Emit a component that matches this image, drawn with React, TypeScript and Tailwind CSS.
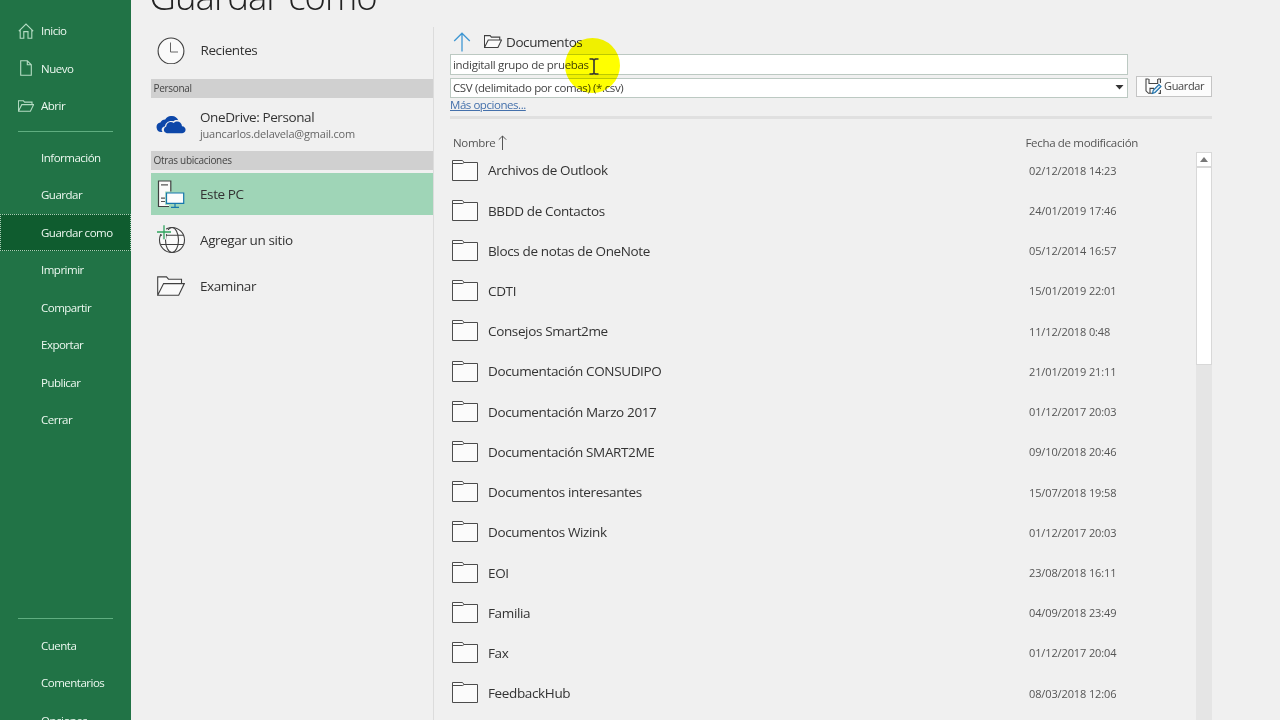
import type { ReactNode } from 'react'
import clsx from 'clsx'

const mainActions = ['Información', 'Guardar', 'Guardar como', 'Imprimir', 'Compartir', 'Exportar', 'Publicar', 'Cerrar']
const footerActions = ['Cuenta', 'Comentarios', 'Opciones']

const folders = [
    { name: 'Archivos de Outlook', date: '02/12/2018 14:23' },
    { name: 'BBDD de Contactos', date: '24/01/2019 17:46' },
    { name: 'Blocs de notas de OneNote', date: '05/12/2014 16:57' },
    { name: 'CDTI', date: '15/01/2019 22:01' },
    { name: 'Consejos Smart2me', date: '11/12/2018 0:48' },
    { name: 'Documentación CONSUDIPO', date: '21/01/2019 21:11' },
    { name: 'Documentación Marzo 2017', date: '01/12/2017 20:03' },
    { name: 'Documentación SMART2ME', date: '09/10/2018 20:46' },
    { name: 'Documentos interesantes', date: '15/07/2018 19:58' },
    { name: 'Documentos Wizink', date: '01/12/2017 20:03' },
    { name: 'EOI', date: '23/08/2018 16:11' },
    { name: 'Familia', date: '04/09/2018 23:49' },
    { name: 'Fax', date: '01/12/2017 20:04' },
    { name: 'FeedbackHub', date: '08/03/2018 12:06' },
]

function HomeIcon() {
    return (
        <svg width="16" height="16" viewBox="0 0 16 16" fill="none" stroke="#b5dcc4" strokeWidth="1.1">
            <path d="M.8 8.2 8 1l7.2 7.2M2.2 7v8.2h3.6V8.6h4.2v6.6h3.8V7" />
        </svg>
    )
}

function NewIcon() {
    return (
        <svg width="16" height="16" viewBox="0 0 16 16" fill="none" stroke="#b5dcc4" strokeWidth="1.1">
            <path d="M2.7.8h6.6l4 4v10.4H2.7zM9.3.8v4h4" />
        </svg>
    )
}

function OpenFolderIcon({ className, stroke, fill = 'none' }: { className: string; stroke: string; fill?: string }) {
    return (
        <svg className={className} viewBox="0 0 28 20" fill={fill} stroke={stroke} strokeWidth="1.1">
            <path d="M.7 19.3V.9h8.8l2 2.3h13v4.4M.7 19.3 6.6 7.6h20.7l-5.6 11.7z" vectorEffect="non-scaling-stroke" />
        </svg>
    )
}

function ClockIcon() {
    return (
        <svg width="28" height="28" viewBox="0 0 28 28" stroke="#3f3f3f" fill="#fafafa">
            <circle cx="14" cy="14.9" r="12.9" strokeWidth="1.1" />
            <path d="M13.5 6.5v9.5h7.5" fill="none" stroke="#666" />
        </svg>
    )
}

function OneDriveIcon() {
    return (
        <svg width="30" height="18" viewBox="0 0 30 18" fill="#0d47a9">
            <path d="M6.6 15.9H5.5A4.8 4.8 0 0 1 4.4 6.4 5.3 5.3 0 0 1 9.2 3.5 7.5 7.5 0 0 1 22.3 4.2c-2-.5-3.7 0-5 1.1-4-1.1-7.9 1.2-8.3 5-3.1.4-4.4 3.6-2.4 5.6z" />
            <path d="M10.8 17.2a3.4 3.4 0 0 1-.6-6.6c0-4 4.4-5.9 7.6-3.6 3-3 8-1 8.2 3.2 4.7.2 4.7 7 .3 7z" />
        </svg>
    )
}

function ComputerIcon() {
    return (
        <svg width="28" height="28" viewBox="0 0 28 28" fill="none" strokeWidth="1.2">
            <path d="M1.5 1h12.3v25.5H1.5z" fill="#fafafa" stroke="#404040" />
            <path d="M4 4.8h7M4 18.2h4M4 21.5h4" stroke="#555" />
            <path d="M8.2 11.4H29v16.2H12V25H8.2z" fill="#9fd5b7" />
            <path d="M9.5 13h17.2v10.3H9.5z" fill="#fcfcfc" stroke="#1677ad" />
            <path d="M18 23.5v3.7M14 27.3h8" stroke="#1677ad" />
        </svg>
    )
}

function GlobeIcon() {
    return (
        <svg width="30" height="30" viewBox="0 0 30 30" fill="none" stroke="#404040" strokeWidth="1.1">
            <circle cx="16" cy="15" r="12.5" fill="#fafafa" />
            <ellipse cx="16" cy="15" rx="6.5" ry="12.5" />
            <path d="M5 10.3h22M5 19.5h22" />
            <path d="M1 7h13.5M8 1v13.5" stroke="#f0f0f0" strokeWidth="4" />
            <path d="M1 7h14M8 .3v14" stroke="#2fa45d" strokeWidth="1.3" />
        </svg>
    )
}

function FolderIcon() {
    return (
        <svg className="shrink-0" width="27" height="22" viewBox="0 0 27 22" fill="#fbfbfb" stroke="#4c4c4c">
            <path d="M.5 20.5V.5h10l1.5 2H25.5v18z" />
            <path d="M.5 3.5h10.2l1.3-1" fill="none" />
        </svg>
    )
}

function SaveIcon() {
    return (
        <svg width="17" height="17" viewBox="0 0 17 17" fill="none" stroke="#444" strokeWidth="1.1">
            <path d="M7 15.3H3.5L1 12.8V1h2.5M13 1h2.4v4M4 1v4.5h8.7V1M5 15v-4.6h4M13.5 15.4h1.9V12" />
            <path d="m7.5 15.3.7-2.9L14 6.5l2 2-5.9 5.9z" fill="#dcecf6" stroke="#1b6ea8" />
        </svg>
    )
}

function UpArrow({ className, stroke }: { className: string; stroke: string }) {
    return (
        <svg className={className} viewBox="0 0 18 20" fill="none" stroke={stroke} strokeWidth="1.3">
            <path d="M9 19.5V1.2M1.2 9 9 1.2 16.8 9" />
        </svg>
    )
}

function NavItem({ label, icon, active }: { label: string; icon?: ReactNode; active?: boolean }) {
    return (
        <div className={clsx('flex h-[37.45px] shrink-0 items-center', active ? 'border border-dotted border-[#a8cdb5] bg-[#0f5c2f] pl-[17px]' : 'pl-[18px]')}>
            <div className="w-[23px] shrink-0">{icon}</div>
            <span className="pt-px text-[11.5px] leading-4 font-medium tracking-[-0.5px] whitespace-nowrap text-[#edf8f0]">{label}</span>
        </div>
    )
}

function SectionTitle({ children }: { children: ReactNode }) {
    return <div className="flex h-[19px] items-center bg-[#d0d0d0] pl-[3px] text-[10px] tracking-[-0.3px] text-[#444]">{children}</div>
}

function Place({ icon, label, detail, className }: { icon: ReactNode; label: string; detail?: string; className: string }) {
    return (
        <div className={clsx('flex items-center', className)}>
            <div className="flex w-[40px] shrink-0 justify-center">{icon}</div>
            <div className="pl-[9.5px]">
                <div className="text-[13.5px] leading-[18px] tracking-[-0.4px]">{label}</div>
                {detail && <div className="text-[11px] leading-4 tracking-[-0.2px] text-[#666]">{detail}</div>}
            </div>
        </div>
    )
}

export default function App() {
    return (
        <div className="relative flex h-[720px] w-[1280px] overflow-hidden bg-[#f0f0f0] font-['Open_Sans','Noto_Sans',sans-serif] text-[#333]">
            {/* Backstage navigation */}
            <nav className="flex w-[131px] shrink-0 flex-col overflow-hidden bg-[#217346] pt-[12px]">
                <NavItem label="Inicio" icon={<HomeIcon />} />
                <NavItem label="Nuevo" icon={<NewIcon />} />
                <NavItem label="Abrir" icon={<OpenFolderIcon className="h-[12px] w-[16px]" stroke="#b5dcc4" />} />
                <div className="mx-[18px] mt-[7px] mb-[6.5px] h-px shrink-0 bg-[#5fae80]" />
                {mainActions.map((label) => (
                    <NavItem key={label} label={label} active={label === 'Guardar como'} />
                ))}
                <div className="mx-[18px] mt-[180px] mb-[7.5px] h-px shrink-0 bg-[#5fae80]" />
                {footerActions.map((label) => (
                    <NavItem key={label} label={label} />
                ))}
            </nav>

            {/* Save locations */}
            <section className="flex w-[303px] shrink-0 flex-col pl-[19.5px]">
                <h1 className="-mt-[31px] -ml-px h-[58px] text-[36.5px] leading-[54px] font-light tracking-[-0.95px] whitespace-nowrap text-[#222]">Guardar como</h1>
                <div className="flex h-[693px] flex-col border-r border-[#dcdcdc]">
                    <Place className="h-[46px] pb-px pl-[0.5px]" icon={<ClockIcon />} label="Recientes" />
                    <div className="h-[6px]" />
                    <SectionTitle>Personal</SectionTitle>
                    <Place className="h-[53px]" icon={<OneDriveIcon />} label="OneDrive: Personal" detail="juancarlos.delavela@gmail.com" />
                    <SectionTitle>Otras ubicaciones</SectionTitle>
                    <Place className="mt-[3px] h-[42px] bg-[#9fd5b7]" icon={<ComputerIcon />} label="Este PC" />
                    <Place className="mt-[2px] h-[46px] tracking-tight" icon={<GlobeIcon />} label="Agregar un sitio" />
                    <Place className="h-[46px]" icon={<OpenFolderIcon className="h-[20px] w-[28px]" stroke="#404040" fill="#fafafa" />} label="Examinar" />
                </div>
            </section>

            {/* File details and folder list */}
            <main className="flex w-[778px] shrink-0 flex-col pl-[16px]">
                <div className="mt-[30px] flex h-[24px] items-center pl-[3px]">
                    <UpArrow className="h-[20px] w-[18px]" stroke="#3f97d3" />
                    <OpenFolderIcon className="ml-[13px] h-[13px] w-[18px] -translate-y-px" stroke="#404040" fill="#fafafa" />
                    <span className="ml-[4px] text-[13.5px] tracking-[-0.4px]">Documentos</span>
                </div>
                <div className="flex h-[21px] w-[678px] items-center border border-[#bcc9c2] bg-white pl-[2px] text-[11.5px] tracking-[-0.3px] text-[#444]">indigitall grupo de pruebas</div>
                <div className="flex h-[23px] w-[762px] items-center justify-between">
                    <div className="mt-[2px] flex h-[20px] w-[678px] items-center justify-between border border-[#bcc9c2] bg-white pr-[3px] pl-[2px] text-[11.5px] tracking-[-0.37px] text-[#444]">
                        <span>CSV (delimitado por comas) (*.csv)</span>
                        <svg width="9" height="5" viewBox="0 0 9 5" fill="#333">
                            <path d="M.5 0h8l-4 4.6z" />
                        </svg>
                    </div>
                    <button className="flex h-[21px] w-[76px] items-center gap-[2px] border border-[#c4c4c4] bg-[#fcfcfc] pl-[8px] text-[11px] tracking-[-0.35px] text-[#444]">
                        <SaveIcon />
                        Guardar
                    </button>
                </div>
                <a className="-mt-px h-[19px] text-[11.5px] leading-[15px] tracking-[-0.45px] text-[#4470ab] underline">Más opciones...</a>
                <div className="h-[3px] w-[762px] bg-[#e0e0e0]" />

                <div className="flex h-[31px] items-center pt-[17px] pl-[3px] text-[11.5px] tracking-[-0.33px] text-[#555]">
                    <span className="w-[42px]">Nombre</span>
                    <svg className="ml-[3px] -translate-y-px" width="9" height="15" viewBox="0 0 9 15" fill="none" stroke="#555">
                        <path d="M4.5 15V1M.8 4.7 4.5 1l3.7 3.7" />
                    </svg>
                    <span className="ml-[518.5px]">Fecha de modificación</span>
                </div>

                <div className="flex h-[570px] w-[762px] overflow-hidden">
                    <div className="w-[746px] shrink-0 pt-[0.4px] pl-[2px]">
                        {folders.map((folder) => (
                            <div key={folder.name} className="flex h-[40.23px] items-center">
                                <FolderIcon />
                                <span className="w-[541px] pl-[9px] text-[13.5px] tracking-[-0.36px]">{folder.name}</span>
                                <span className="pt-px pl-[9px] text-[11px] tracking-[-0.12px] text-[#555]">{folder.date}</span>
                            </div>
                        ))}
                    </div>
                    {/* Scrollbar */}
                    <div className="mt-[2px] flex w-[16px] flex-col bg-[#e5e5e5]">
                        <div className="flex h-[15px] shrink-0 items-center justify-center border border-[#d8d8d8] bg-white">
                            <svg width="8" height="5" viewBox="0 0 8 5" fill="#777">
                                <path d="M0 5h8L4 0z" />
                            </svg>
                        </div>
                        <div className="h-[198px] border border-[#d8d8d8] bg-white" />
                    </div>
                </div>
            </main>

            {/* Highlighted text cursor */}
            <div className="absolute top-[38px] left-[565px] size-[55px] rounded-full bg-[#ffff00] mix-blend-multiply" />
            <svg className="absolute top-[58px] left-[589px]" width="10" height="17" viewBox="0 0 10 17" fill="none" stroke="#333" strokeWidth="1.6">
                <path d="M.5 1h3.2L5 2l1.300-1h3.200M5 2v13M.5 16h3.200L5 15l1.300 1h3.200" />
            </svg>
        </div>
    )
}
